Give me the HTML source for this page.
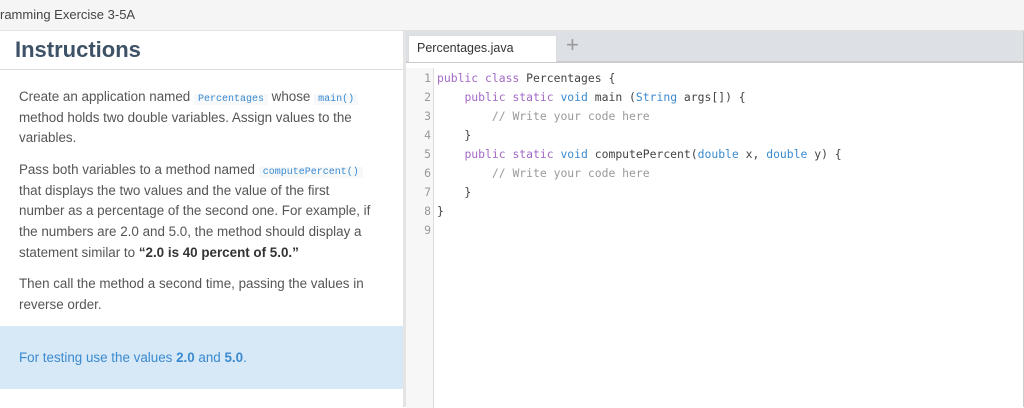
<!DOCTYPE html><html><head><style>
body{margin:0;width:1024px;height:407px;overflow:hidden;background:#fff;font-family:"Liberation Sans",sans-serif;position:relative}
.top{position:absolute;left:0;top:0;width:1024px;height:30px;background:#f5f5f5;border-bottom:1px solid #e2e2e2;font-size:13px;color:#444;line-height:30px}
.left{position:absolute;left:0;top:31px;width:403px;height:376px;background:#fff}
.hdr{height:38px;border-bottom:1px solid #ddd;font-weight:bold;font-size:22px;color:#3d5266;padding-left:15px;line-height:38px}
.txt{position:absolute;left:19px;width:352px;font-size:13.4px;color:#555;line-height:20.7px}
code{font-family:"Liberation Mono",monospace;font-size:10px;line-height:1;color:#3a8ad0;background:#f6f8fa;padding:0 4px;vertical-align:baseline}
.blue{position:absolute;left:0;top:326px;width:403px;height:63px;background:#d7e8f6;color:#3a8ad0;font-size:13.4px;line-height:63px;padding-left:19px;box-sizing:border-box}
.sep{position:absolute;left:403px;top:31px;width:3px;height:376px;background:#e4e4e4}
.right{position:absolute;left:406px;top:31px;width:617px;height:376px;background:#fff;border-right:1px solid #ccc}
.tabs{height:30px;background:#dde0e4;border-bottom:2px solid #ccc;position:relative}
.tab{position:absolute;left:2px;top:4px;width:149px;height:27px;background:#fff;font-size:12.5px;color:#333;line-height:25px;padding-left:8px;box-sizing:border-box;border:1px solid #ddd;border-bottom:none}
.plus{position:absolute;left:160px;top:0;font-size:22px;font-weight:300;color:#999;line-height:28px}
.gut{position:absolute;left:0;top:37px;width:27px;height:340px;background:#f7f7f7;border-right:1px solid #ddd}
pre{margin:0;font-family:"DejaVu Sans Mono",monospace;font-size:11.4px;line-height:19px;color:#444}
.ln{position:absolute;left:0;top:38px;width:25px;text-align:right;color:#999}
.code{position:absolute;left:31px;top:38px}
.k{color:#a36ac7}.t{color:#3a8ad0}.c{color:#999}
</style></head><body>
<div class="top">ramming Exercise 3-5A</div>
<div class="left"><div class="hdr">Instructions</div></div>
<div class="txt" style="top:87px">Create an application named <code>Percentages</code> whose <code>main()</code> method holds two double variables. Assign values to the variables.</div>
<div class="txt" style="top:160px">Pass both variables to a method named <code>computePercent()</code> that displays the two values and the value of the first number as a percentage of the second one. For example, if the numbers are 2.0 and 5.0, the method should display a statement similar to <b style="color:#333">“2.0 is 40 percent of 5.0.”</b></div>
<div class="txt" style="top:274px">Then call the method a second time, passing the values in reverse order.</div>
<div class="blue">For testing use the values <b>2.0</b> and <b>5.0</b>.</div>
<div class="sep"></div>
<div class="right">
<div class="tabs"><div class="tab">Percentages.java</div><div class="plus">+</div></div>
<div class="gut"></div>
<pre class="ln">1
2
3
4
5
6
7
8
9</pre>
<pre class="code"><span class="k">public class</span> Percentages {
    <span class="k">public static</span> <span class="t">void</span> main (<span class="t">String</span> args[]) {
        <span class="c">// Write your code here</span>
    }
    <span class="k">public static</span> <span class="t">void</span> computePercent(<span class="t">double</span> x, <span class="t">double</span> y) {
        <span class="c">// Write your code here</span>
    }
}
</pre>
</div>
</body></html>
